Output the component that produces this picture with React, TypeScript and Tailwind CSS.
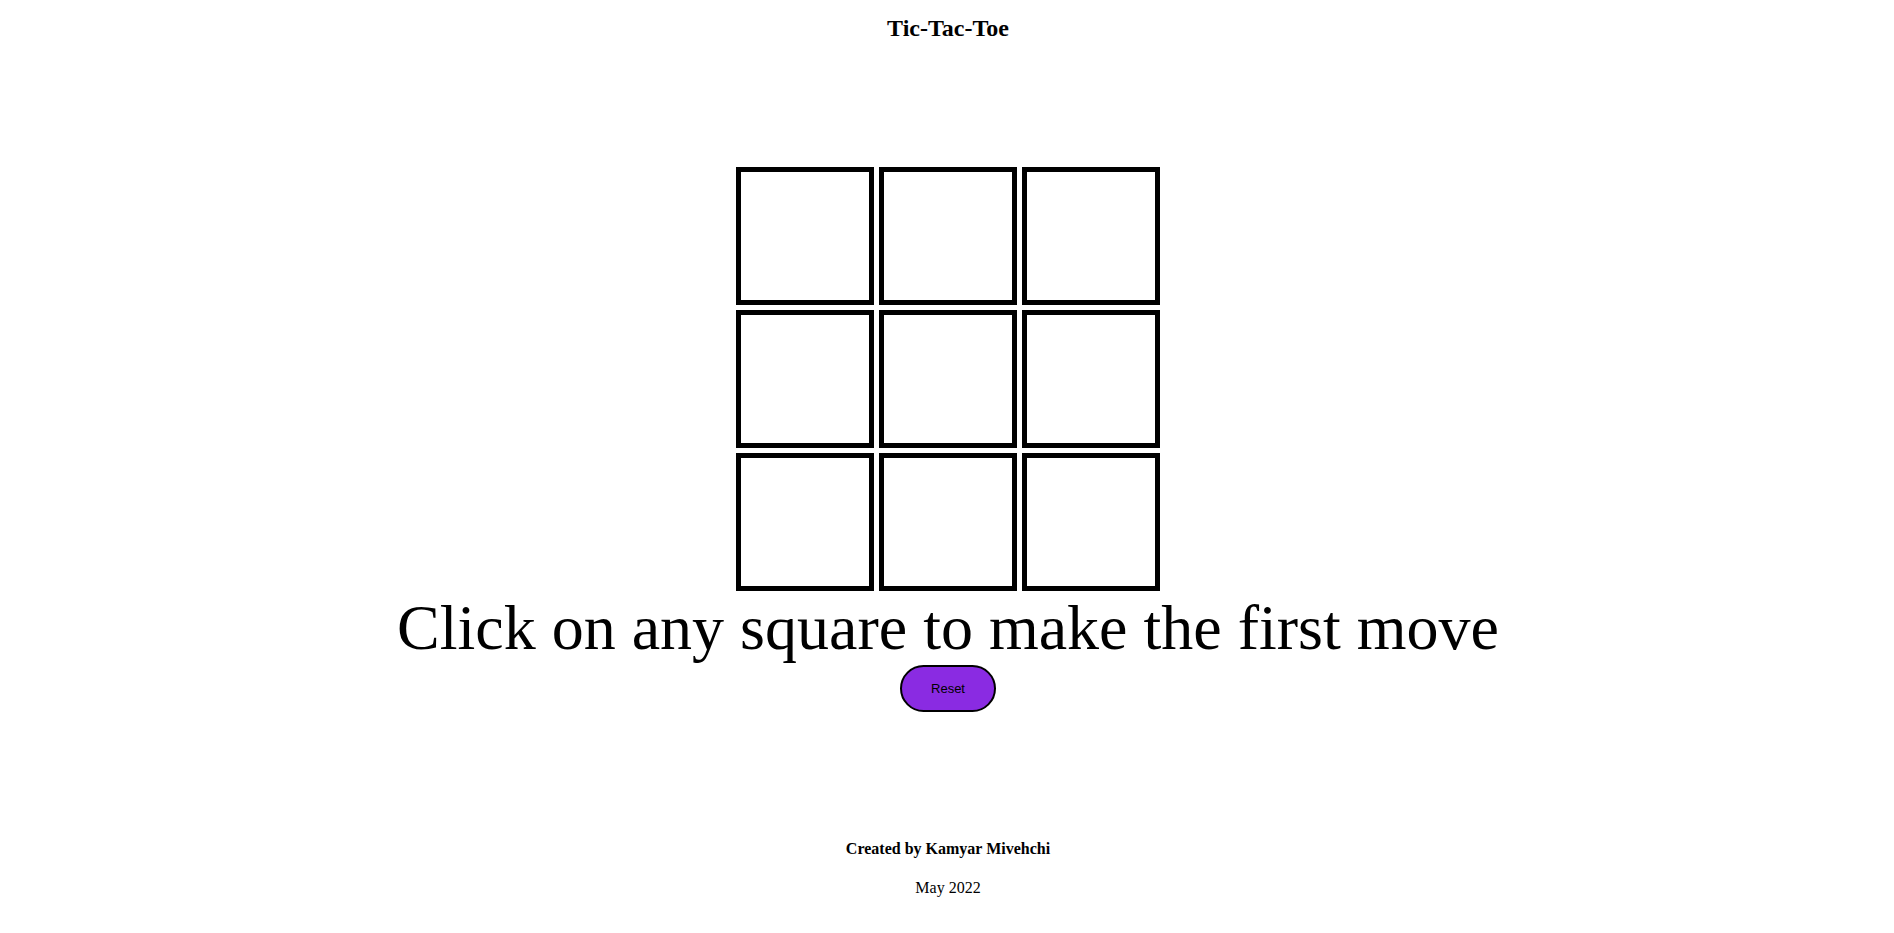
const squares = Array.from({ length: 9 }, (_, i) => i);

function Board() {
  return (
    <div className="grid grid-cols-3 gap-[5px]">
      {squares.map((i) => (
        <button
          key={i}
          className="w-[138px] h-[138px] border-[5px] border-black bg-white"
          aria-label={`square ${i + 1}`}
        />
      ))}
    </div>
  );
}

export default function App() {
  return (
    <div className="min-h-screen bg-white text-black pl-[2px] flex flex-col items-center font-['Liberation_Serif','Times_New_Roman',serif]">
      <h2 className="pt-[14px] text-[24px] leading-[28px] font-bold">Tic-Tac-Toe</h2>

      <div className="mt-[125px]">
        <Board />
      </div>

      <p className="text-[64px] leading-[74px] whitespace-nowrap">
        Click on any square to make the first move
      </p>

      <button className="w-[96px] h-[47px] rounded-full border-2 border-black bg-[#8a2be2] text-[13px] text-black font-['Liberation_Sans',Arial,sans-serif]">
        Reset
      </button>

      <footer className="mt-[128px] flex flex-col items-center text-[16px] leading-[18px]">
        <p className="font-bold">Created by Kamyar Mivehchi</p>
        <p className="mt-[21px]">May 2022</p>
      </footer>
    </div>
  );
}
